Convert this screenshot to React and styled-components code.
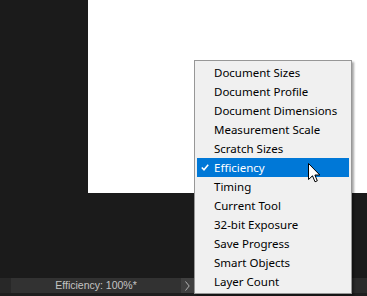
import React from "react";
import styled, { createGlobalStyle } from "styled-components";

const Global = createGlobalStyle`
  html, body { margin: 0; padding: 0; background: #1b1b1b; }
  * { box-sizing: border-box; }
`;

const Screen = styled.div`
  position: relative;
  width: 367px;
  height: 296px;
  overflow: hidden;
  background: #1b1b1b;
  display: flex;
  flex-direction: column;
`;

const Workspace = styled.div`
  height: 278px;
  display: flex;
  align-items: flex-start;
  padding-left: 88px;
`;

const Canvas = styled.div`
  flex: 1;
  height: 193px;
  background: #ffffff;
`;

const StatusBar = styled.div`
  height: 15px;
  display: flex;
  background: #2b2b2b;
`;

const Gutter = styled.div`
  width: 11px;
  background: #282828;
`;

const StatusInfo = styled.div`
  width: 170px;
  background: #323232;
  color: #c4c4c4;
  font-family: "Liberation Sans", Arial, sans-serif;
  font-size: 10.5px;
  display: flex;
  align-items: center;
  justify-content: center;
  line-height: 15px;
`;

const ArrowButton = styled.div`
  width: 13px;
  background: #404040;
  display: flex;
  align-items: center;
  justify-content: center;
`;

const BottomEdge = styled.div`
  flex: 1;
  background: #1e1e1e;
`;

const Menu = styled.div`
  position: absolute;
  left: 194px;
  top: 60px;
  width: 158px;
  padding: 2px;
  background: #f0f0f0;
  border: 1px solid #979797;
  box-shadow: 2px 2px 2px rgba(0, 0, 0, 0.35);
  font-family: "Noto Sans", "Segoe UI", sans-serif;
  font-size: 11.5px;
`;

const Item = styled.div`
  height: 19px;
  display: flex;
  align-items: center;
  padding-left: 17px;
  position: relative;
  color: ${(p) => (p.$active ? "#ffffff" : "#000000")};
  background: ${(p) => (p.$active ? "#0078d7" : "transparent")};
  white-space: nowrap;
`;

const Check = styled.svg`
  position: absolute;
  left: 4px;
  top: 6px;
`;

const Cursor = styled.svg`
  position: absolute;
  left: 308px;
  top: 163px;
`;

const items = [
  "Document Sizes",
  "Document Profile",
  "Document Dimensions",
  "Measurement Scale",
  "Scratch Sizes",
  "Efficiency",
  "Timing",
  "Current Tool",
  "32-bit Exposure",
  "Save Progress",
  "Smart Objects",
  "Layer Count",
];

export default function App() {
  return (
    <>
      <Global />
      <Screen>
        <Workspace>
          <Canvas />
        </Workspace>
        <StatusBar>
          <Gutter />
          <StatusInfo>Efficiency: 100%*</StatusInfo>
          <ArrowButton>
            <svg width="5" height="10" viewBox="0 0 5 10">
              <path d="M0.5 0.5 L4.2 5 L0.5 9.5" fill="none" stroke="#b0b0b0" strokeWidth="1" />
            </svg>
          </ArrowButton>
        </StatusBar>
        <BottomEdge />
        <Menu>
          {items.map((t) => (
            <Item key={t} $active={t === "Efficiency"}>
              {t === "Efficiency" && (
                <Check width="8" height="7" viewBox="0 0 8 7">
                  <path d="M0.8 3.5 L3 5.8 L7.2 0.8" fill="none" stroke="#ffffff" strokeWidth="1.6" />
                </Check>
              )}
              {t}
            </Item>
          ))}
        </Menu>
        <Cursor width="14" height="21" viewBox="0 0 14 21">
          <path
            d="M0.5 0.5 L0.5 16.5 L4.5 12.8 L7 18.8 L9.3 17.8 L6.9 12 L11.8 12 Z"
            fill="#ffffff"
            stroke="#000000"
            strokeWidth="1"
            strokeLinejoin="miter"
          />
        </Cursor>
      </Screen>
    </>
  );
}
